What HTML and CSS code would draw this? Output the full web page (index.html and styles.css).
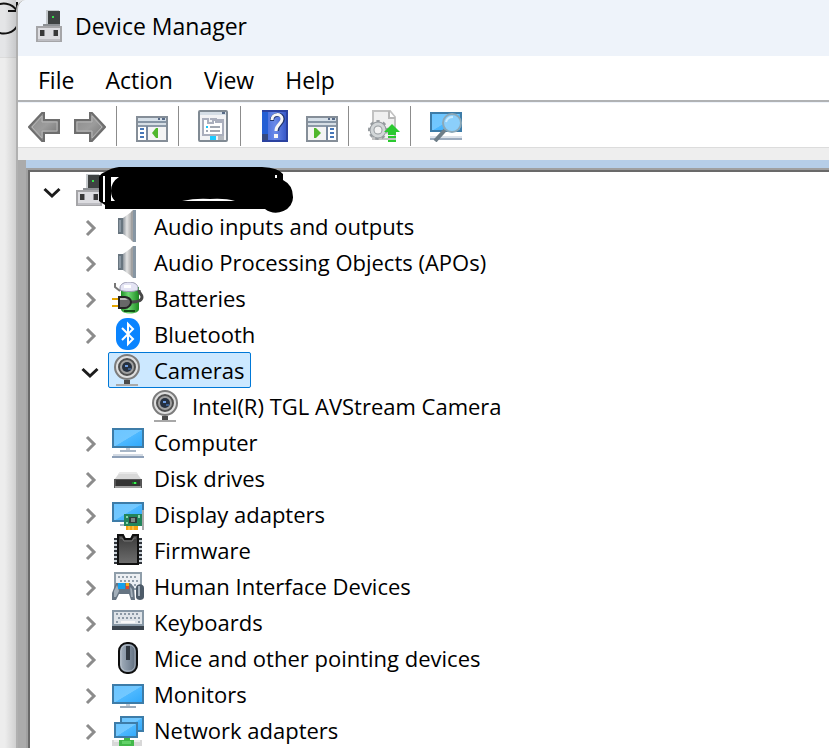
FILE: index.html
```
<!DOCTYPE html>
<html lang="en">
<head>
    <meta charset="UTF-8">
    <meta name="viewport" content="width=device-width, initial-scale=1.0">
    <title>Device Manager</title>
    <link rel="stylesheet" href="styles.css">
</head>
<body>
    <!-- shared icons -->
    <svg class="defs" width="0" height="0" aria-hidden="true">
        <defs>
            <linearGradient id="screen" x1="0" y1="0" x2="1" y2="1">
                <stop offset="0" stop-color="#6cc5ff"/>
                <stop offset=".5" stop-color="#72c8ff"/>
                <stop offset=".52" stop-color="#4db8ff"/>
                <stop offset="1" stop-color="#2fa8fb"/>
            </linearGradient>
            <linearGradient id="steel" x1="0" x2="1">
                <stop offset="0" stop-color="#8d959c"/>
                <stop offset=".35" stop-color="#e3e3e3"/>
                <stop offset="1" stop-color="#8d8d8d"/>
            </linearGradient>
            <linearGradient id="arrow" x1="0" y1="0" x2="1" y2="1">
                <stop offset="0" stop-color="#8a8a8a"/>
                <stop offset=".5" stop-color="#9c9c9c"/>
                <stop offset="1" stop-color="#6c6c6c"/>
            </linearGradient>
            <linearGradient id="book" x1="0" x2="1">
                <stop offset="0" stop-color="#3c64d8"/>
                <stop offset=".5" stop-color="#6a8ae8"/>
                <stop offset="1" stop-color="#2f50c4"/>
            </linearGradient>
            <linearGradient id="green" x1="0" x2="1">
                <stop offset="0" stop-color="#1d8f22"/>
                <stop offset=".4" stop-color="#6fd873"/>
                <stop offset="1" stop-color="#1b8a20"/>
            </linearGradient>
            <linearGradient id="chipfill" x1="0" y1="0" x2="0" y2="1">
                <stop offset="0" stop-color="#3a3a3a"/>
                <stop offset="1" stop-color="#6e6e6e"/>
            </linearGradient>
            <linearGradient id="mousefill" x1="0" x2="1">
                <stop offset="0" stop-color="#a9b5c1"/>
                <stop offset=".5" stop-color="#8290a0"/>
                <stop offset="1" stop-color="#5a6878"/>
            </linearGradient>
        </defs>

        <symbol id="right" viewBox="0 0 24 24">
            <path d="M9 5l7 7-7 7" fill="none" stroke="#8c8c8c" stroke-width="3"/>
        </symbol>
        <symbol id="down" viewBox="0 0 24 24">
            <path d="M4.500 9l7.500 7 7.500-7" fill="none" stroke="#1c1c1c" stroke-width="3"/>
        </symbol>

        <symbol id="machine" viewBox="0 0 32 32">
            <path d="M12 0h13v15H12z" fill="#c5c9cc"/>
            <path d="M14 1h12v14H14z" fill="#3e4242"/>
            <path d="M18 6h2v2h-2z" fill="#36e04a"/>
            <path d="M9 14h17v2H9z" fill="#8d9094"/>
            <path d="M2 16h26v16H2z" fill="#a5a5a8"/>
            <path d="M4 18h22v11H4z" fill="#dcdce0"/>
            <path d="M4 29h22v2H4z" fill="#bdbdc2"/>
            <path d="M6 20h4v6H6zM20 20h4v6h-4z" fill="#383838"/>
            <path d="M10 20h1v6h-1zM19 20h1v6h-1z" fill="#8f8f94"/>
        </symbol>

        <symbol id="speaker" viewBox="0 0 32 32">
            <path d="M6 8h6v16H6z" fill="#68757f"/>
            <path d="M7 10h2v12H7z" fill="#8b98a3"/>
            <path d="M11 8L22 0v32L11 24z" fill="url(#steel)"/>
            <path d="M21 0h3v32h-3z" fill="#8796a3"/>
            <path d="M19 2l2-2v32l-2-2z" fill="#a1a1a1"/>
        </symbol>

        <symbol id="battery" viewBox="0 0 32 32">
            <path d="M9 5v22c0 6 18 6 18 0V5z" fill="url(#green)"/>
            <path d="M8 6c0-8 18-8 18 0v2c-4 2-14 2-18 0z" fill="#e4e4f4" stroke="#9a9ab0"/>
            <path d="M12 3h7v3h-7z" fill="#fff"/>
            <path d="M3 1v4l5 4" fill="none" stroke="#777" stroke-width="2"/>
            <path d="M19 20c6 0 11-1 11-5 0-3-3-3-3-7" fill="none" stroke="#484848" stroke-width="3"/>
            <path d="M0 17h7M0 24h7" stroke="#e5a500" stroke-width="2"/>
            <path d="M7 15h6c3 0 6 2 6 5s-3 6-6 6H7z" fill="#686868" stroke="#242424" stroke-width="2"/>
            <path d="M8 16h5l3 2H8z" fill="#bcbcbc"/>
            <path d="M12 29h11" stroke="#124f16" stroke-width="2"/>
        </symbol>

        <symbol id="bluetooth" viewBox="0 0 32 32">
            <rect x="4" y="0" width="24" height="32" rx="11" fill="#0a84ff"/>
            <path d="M10 10l11 11-5 5V6l5 5-11 11" fill="none" stroke="#fff" stroke-width="2"/>
        </symbol>

        <symbol id="camera" viewBox="0 0 32 32">
            <circle cx="15" cy="13" r="12" fill="#dedede" stroke="#7c7c7c" stroke-width="2"/>
            <circle cx="15" cy="13" r="8" fill="#a0a0a0" stroke="#505050" stroke-width="2"/>
            <circle cx="15" cy="13" r="5" fill="#26303f"/>
            <path d="M13 11h3v2h-3z" fill="#6d9be0"/>
            <path d="M16 14h3v2h-3z" fill="#3c5d8d"/>
            <path d="M12 26h6v4h-6z" fill="#4a4a4a"/>
            <path d="M4 30h22v2H4z" fill="#a8a8a8"/>
        </symbol>

        <symbol id="computer" viewBox="0 0 32 32">
            <path d="M1 3h30v18H1z" fill="url(#screen)" stroke="#3d7ca8" stroke-width="2"/>
            <path d="M14 22h4v2h-4z" fill="#c3cbd6"/>
            <path d="M8 24h16v2H8z" fill="#a7b6c7"/>
            <path d="M1 28h30v2H1z" fill="#d4dbe4"/>
            <path d="M0 30h32v2H0z" fill="#8ea0b8"/>
        </symbol>

        <symbol id="disk" viewBox="0 0 32 32">
            <path d="M8 10h16l6 8H2z" fill="#d9d9d9"/>
            <path d="M8 10h16l2 2H6z" fill="#e8e8e8"/>
            <path d="M2 17h28v9H2z" fill="#555"/>
            <path d="M4 18h24v6H4z" fill="#333"/>
            <path d="M3 24h26v2H3z" fill="#9d9d9d"/>
            <path d="M20 20h5v2h-5z" fill="#197f25"/>
            <path d="M22 20h2v2h-2z" fill="#3bf354"/>
        </symbol>

        <symbol id="display" viewBox="0 0 32 32">
            <path d="M1 5h30v18H1z" fill="url(#screen)" stroke="#3d7ca8" stroke-width="2"/>
            <path d="M8 26h6v2H8z" fill="#a7b6c7"/>
            <path d="M30 12h2v20h-2z" fill="#a9a9a9"/>
            <path d="M12 16h18v12H12z" fill="#23855c"/>
            <path d="M14 18h2v2h-2zM14 24h2v2h-2zM26 17h2v3h-2z" fill="#8cd6ae"/>
            <path d="M17 19h8v6h-8z" fill="#2f3b39"/>
            <path d="M19 20h4v4h-4z" fill="#7c8784"/>
            <path d="M14 28h12v4H14z" fill="#f5a313"/>
            <path d="M17 28v4M21 28v4" stroke="#ffdb70"/>
        </symbol>

        <symbol id="firmware" viewBox="0 0 32 32">
            <path d="M4 4v26M28 4v26" stroke="#30343a" stroke-width="4" stroke-dasharray="2 2"/>
            <path d="M4 6v24M28 6v24" stroke="#cdd4da" stroke-width="4" stroke-dasharray="2 2"/>
            <path d="M6 1h5l2 4h6l2-4h5v29H6z" fill="url(#chipfill)" stroke="#101010" stroke-width="2"/>
            <path d="M8 4h2l2 3h8l2-3h2" fill="none" stroke="#777"/>
        </symbol>

        <symbol id="hid" viewBox="0 0 32 32">
            <path d="M3 3h26v16H3z" fill="#eceff3" stroke="#8f9eaa" stroke-width="2"/>
            <path d="M6 7h20M8 11h18M6 15h20" stroke="#94a0ab" stroke-width="2" stroke-dasharray="2 2"/>
            <path d="M4 13h14l4 4 1 13h-4l-2-6H7l-3 6H0v-7z" fill="#667482"/>
            <path d="M2 21l3-6 2 6-3 6H2zM18 17l2 2 1 8h-2z" fill="#a3afba"/>
            <path d="M8 24h8v6H8z" fill="#fff"/>
            <path d="M6 13h7v6H6z" fill="#14a0ed"/>
            <path d="M14 13h3v3h-3z" fill="#f3ad1c"/>
            <path d="M14 16h3v3h-3z" fill="#e3472b"/>
            <path d="M24 18c0-5 8-5 8 0v9c0 4-8 4-8 0z" fill="#4d5b69"/>
            <path d="M26 16h2v10h-2z" fill="#a5b1bc"/>
        </symbol>

        <symbol id="keyboard" viewBox="0 0 32 32">
            <path d="M0 4h32v18H0z" fill="#8898a6"/>
            <path d="M2 6h28v12H2z" fill="#dfe4e9"/>
            <path d="M4 8h24M6 12h22M4 16h4M26 16h2" stroke="#8b98a5" stroke-width="2" stroke-dasharray="2 2"/>
            <path d="M9 16h14" stroke="#f8f8f8" stroke-width="2"/>
            <path d="M0 20h32v4H0z" fill="#3a434d"/>
        </symbol>

        <symbol id="mouse" viewBox="0 0 32 32">
            <rect x="7" y="1" width="18" height="30" rx="8" fill="url(#mousefill)" stroke="#0d0d0d" stroke-width="2"/>
            <rect x="9" y="3" width="14" height="26" rx="6" fill="none" stroke="#c4ccd4" stroke-opacity=".6"/>
            <path d="M14 4h4v14h-4z" fill="#303840"/>
        </symbol>

        <symbol id="monitor" viewBox="0 0 32 32">
            <path d="M1 7h30v18H1z" fill="url(#screen)" stroke="#3d7ca8" stroke-width="2"/>
            <path d="M14 26h4v2h-4z" fill="#c3cbd6"/>
            <path d="M8 28h16v2H8z" fill="#9aaaba"/>
        </symbol>

        <symbol id="network" viewBox="0 0 32 32">
            <path d="M9 3h22v14H9z" fill="url(#screen)" stroke="#3d7ca8" stroke-width="2"/>
            <path d="M3 9h22v14H3z" fill="url(#screen)" stroke="#3d7ca8" stroke-width="2"/>
            <path d="M0 26h30v6H0z" fill="#d8d8d8"/>
            <path d="M2 26h26v2H2z" fill="#ececec"/>
            <path d="M7 26h15v6H7zM12 24h6v3h-6z" fill="#43b84a"/>
            <path d="M10 27h9v3h-9z" fill="#62d268"/>
        </symbol>

        <symbol id="back" viewBox="0 0 32 32">
            <path d="M1 17L14 3h2v7h15v13H16v8h-2z" fill="url(#arrow)" stroke="#6e6e6e" stroke-width="2"/>
            <path d="M4 17l10-11v6h15v9H14v7z" fill="none" stroke="#b5b5b5"/>
        </symbol>

        <symbol id="forward" viewBox="0 0 32 32">
            <path d="M31 17L18 3h-2v7H1v13h15v8h2z" fill="url(#arrow)" stroke="#6e6e6e" stroke-width="2"/>
            <path d="M28 17L18 6v6H3v9h15v7z" fill="none" stroke="#b5b5b5"/>
        </symbol>

        <symbol id="tree-pane" viewBox="0 0 32 32">
            <path d="M1 7h30v24H1z" fill="#f4f4f4" stroke="#858e98" stroke-width="2"/>
            <path d="M2 8h28v3H2z" fill="#d5dfe8"/>
            <path d="M22 8h2v2h-2zM26 8h3v2h-3z" fill="#576a87"/>
            <path d="M2 11h28v2H2z" fill="#8695a5"/>
            <path d="M2 13h28v2H2z" fill="#d6dee5"/>
            <path d="M2 15h28v2H2z" fill="#8c99a8"/>
            <path d="M2 17h8v13H2z" fill="#fff"/>
            <path d="M10 16h2v14h-2z" fill="#77889f"/>
            <path d="M4 19h4M4 23h4M4 27h4" stroke="#4777b8" stroke-width="2"/>
            <path d="M22 18v10h-2l-4-5 4-5z" fill="#50b72c"/>
        </symbol>

        <symbol id="properties" viewBox="0 0 32 32">
            <rect x="1" y="1" width="28" height="30" rx="1" fill="#f2f3f5" stroke="#808a93" stroke-width="2"/>
            <path d="M2 2h26v3H2z" fill="#d5dee6"/>
            <path d="M24 2h3v2h-3z" fill="#576a87"/>
            <path d="M5 13V9h5v4h5v-3h10v15H5z" fill="#fff" stroke="#aaafbd" stroke-width="2"/>
            <path d="M12 9h6v3h5V9" fill="none" stroke="#aaafbd" stroke-width="2"/>
            <path d="M8 17h2" stroke="#18c4fa" stroke-width="2"/>
            <path d="M8 21h2M12 17h10M12 21h10" stroke="#a1a8b2" stroke-width="2"/>
            <path d="M12 26h6v4h-6z" fill="#1ccaff"/>
            <path d="M20 26h6v4h-6z" fill="#b5bac0"/>
        </symbol>

        <symbol id="help" viewBox="0 0 32 32">
            <path d="M2 0h26v32H2z" fill="url(#book)"/>
            <path d="M2 0h6v32H2z" fill="#245fd4"/>
            <path d="M2 24h6v8H2z" fill="#354a80"/>
            <path d="M2 0h26v2H2zM26 0h2v32h-2zM2 30h26v2H2z" fill="#2b42a0"/>
            <path d="M12 11c0-8 11-8 11-2 0 5-6 5-6 12" fill="none" stroke="#24386f" stroke-width="4"/>
            <path d="M12 10c0-7 10-7 10-1 0 5-6 5-6 12" fill="none" stroke="#f6f6f6" stroke-width="3"/>
            <path d="M14 24h4v4h-4z" fill="#f6f6f6"/>
        </symbol>

        <symbol id="action-pane" viewBox="0 0 32 32">
            <path d="M1 7h30v24H1z" fill="#f4f4f4" stroke="#858e98" stroke-width="2"/>
            <path d="M2 8h28v3H2z" fill="#d5dfe8"/>
            <path d="M22 8h2v2h-2zM26 8h3v2h-3z" fill="#576a87"/>
            <path d="M2 11h28v2H2z" fill="#8695a5"/>
            <path d="M2 13h28v2H2z" fill="#d6dee5"/>
            <path d="M2 15h28v2H2z" fill="#8c99a8"/>
            <path d="M22 17h8v13h-8z" fill="#fff"/>
            <path d="M20 16h2v14h-2z" fill="#77889f"/>
            <path d="M24 19h4M24 23h4M24 27h4" stroke="#4777b8" stroke-width="2"/>
            <path d="M8 18v10h2l5-5-5-5z" fill="#50b72c"/>
        </symbol>

        <symbol id="update" viewBox="0 0 32 32">
            <path d="M5 1h17l5 6v22H5z" fill="#f0f0f0" stroke="#c2c2c2" stroke-width="2"/>
            <path d="M21 1v7h6" fill="#fff" stroke="#b7b7b7" stroke-width="2"/>
            <circle cx="10" cy="20" r="8" fill="none" stroke="#969b9f" stroke-width="4" stroke-dasharray="3 3"/>
            <circle cx="10" cy="20" r="6" fill="#f3f3f3" stroke="#969b9f" stroke-width="5"/>
            <circle cx="10" cy="20" r="6" fill="none" stroke="#d2d6d8" stroke-width="3"/>
            <path d="M16 22l8-8 8 8h-4v3h-8v-3z" fill="#2bc930"/>
            <path d="M20 27h8M20 31h8" stroke="#2bc930" stroke-width="2"/>
        </symbol>

        <symbol id="scan" viewBox="0 0 32 32">
            <path d="M1 3h30v18H1z" fill="url(#screen)" stroke="#3d7ca8" stroke-width="2"/>
            <path d="M0 28h32v2H0z" fill="#9aaabd"/>
            <path d="M0 26h32v2H0z" fill="#dce3eb"/>
            <path d="M15 20L5 31" stroke="#6e7e88" stroke-width="4"/>
            <circle cx="22" cy="13" r="9" fill="#8bcffb" stroke="#8ba8b8" stroke-width="2"/>
            <path d="M16 12c1-4 4-5 7-5" fill="none" stroke="#c8eaff" stroke-width="2"/>
        </symbol>
    </svg>

    <div class="behind">
        <svg class="reload" width="18" height="36" viewBox="0 0 18 36" aria-hidden="true">
            <path d="M17 11A15 15 0 1 0 18 24" fill="none" stroke="#111" stroke-width="2"/>
            <path d="M8 11h9V2" fill="none" stroke="#111" stroke-width="2"/>
        </svg>
    </div>

    <main class="window">
        <header class="title-bar">
            <svg class="icon"><use href="#machine"/></svg>
            <h1>Device Manager</h1>
        </header>

        <nav class="menu">
            <button type="button">File</button>
            <button type="button">Action</button>
            <button type="button">View</button>
            <button type="button">Help</button>
        </nav>

        <div class="toolbar">
            <button type="button" aria-label="Back"><svg class="icon"><use href="#back"/></svg></button>
            <button type="button" aria-label="Forward"><svg class="icon"><use href="#forward"/></svg></button>
            <span class="sep"></span>
            <button type="button" aria-label="Show or hide console tree"><svg class="icon"><use href="#tree-pane"/></svg></button>
            <span class="sep"></span>
            <button type="button" aria-label="Properties"><svg class="icon"><use href="#properties"/></svg></button>
            <span class="sep"></span>
            <button type="button" aria-label="Help"><svg class="icon"><use href="#help"/></svg></button>
            <button type="button" aria-label="Show or hide action pane"><svg class="icon"><use href="#action-pane"/></svg></button>
            <span class="sep"></span>
            <button type="button" aria-label="Update driver"><svg class="icon"><use href="#update"/></svg></button>
            <span class="sep"></span>
            <button type="button" aria-label="Scan for hardware changes"><svg class="icon"><use href="#scan"/></svg></button>
        </div>

        <div class="frame">
            <div class="pane">
                <ul class="tree">
                    <li>
                        <div class="row">
                            <button type="button" class="expander" aria-label="Collapse"><svg><use href="#down"/></svg></button>
                            <span class="item"><svg class="icon"><use href="#machine"/></svg></span>
                            <!-- computer name is blacked out -->
                            <svg class="redaction" width="200" height="48" viewBox="0 0 200 48" aria-hidden="true">
                                <path d="M6 5Q12 1 20 0H163Q180 1 184 7V13Q194 18 194 30A17 15 0 0 1 166 42H6V38L0 34V10Q2 6 6 5z"/>
                                <path d="M12 10h8q-8 5-8 14 0 6 4 10h-4z" fill="#fff"/>
                                <path d="M5 9v26" stroke="#fff" stroke-width="2"/>
                                <path d="M83 34q14-3 28-2 15-1 25 2z" fill="#fff"/>
                                <path d="M176 8h2v3h-2z" fill="#fff"/>
                            </svg>
                        </div>
                        <ul>
                            <li><div class="row"><button type="button" class="expander" aria-label="Expand"><svg><use href="#right"/></svg></button><span class="item"><svg class="icon"><use href="#speaker"/></svg>Audio inputs and outputs</span></div></li>
                            <li><div class="row"><button type="button" class="expander" aria-label="Expand"><svg><use href="#right"/></svg></button><span class="item"><svg class="icon"><use href="#speaker"/></svg>Audio Processing Objects (APOs)</span></div></li>
                            <li><div class="row"><button type="button" class="expander" aria-label="Expand"><svg><use href="#right"/></svg></button><span class="item"><svg class="icon"><use href="#battery"/></svg>Batteries</span></div></li>
                            <li><div class="row"><button type="button" class="expander" aria-label="Expand"><svg><use href="#right"/></svg></button><span class="item"><svg class="icon"><use href="#bluetooth"/></svg>Bluetooth</span></div></li>
                            <li>
                                <div class="row"><button type="button" class="expander" aria-label="Collapse"><svg><use href="#down"/></svg></button><span class="item selected"><svg class="icon"><use href="#camera"/></svg>Cameras</span></div>
                                <ul>
                                    <li><div class="row leaf"><span class="item"><svg class="icon"><use href="#camera"/></svg>Intel(R) TGL AVStream Camera</span></div></li>
                                </ul>
                            </li>
                            <li><div class="row"><button type="button" class="expander" aria-label="Expand"><svg><use href="#right"/></svg></button><span class="item"><svg class="icon"><use href="#computer"/></svg>Computer</span></div></li>
                            <li><div class="row"><button type="button" class="expander" aria-label="Expand"><svg><use href="#right"/></svg></button><span class="item"><svg class="icon"><use href="#disk"/></svg>Disk drives</span></div></li>
                            <li><div class="row"><button type="button" class="expander" aria-label="Expand"><svg><use href="#right"/></svg></button><span class="item"><svg class="icon"><use href="#display"/></svg>Display adapters</span></div></li>
                            <li><div class="row"><button type="button" class="expander" aria-label="Expand"><svg><use href="#right"/></svg></button><span class="item"><svg class="icon"><use href="#firmware"/></svg>Firmware</span></div></li>
                            <li><div class="row"><button type="button" class="expander" aria-label="Expand"><svg><use href="#right"/></svg></button><span class="item"><svg class="icon"><use href="#hid"/></svg>Human Interface Devices</span></div></li>
                            <li><div class="row"><button type="button" class="expander" aria-label="Expand"><svg><use href="#right"/></svg></button><span class="item"><svg class="icon"><use href="#keyboard"/></svg>Keyboards</span></div></li>
                            <li><div class="row"><button type="button" class="expander" aria-label="Expand"><svg><use href="#right"/></svg></button><span class="item"><svg class="icon"><use href="#mouse"/></svg>Mice and other pointing devices</span></div></li>
                            <li><div class="row"><button type="button" class="expander" aria-label="Expand"><svg><use href="#right"/></svg></button><span class="item"><svg class="icon"><use href="#monitor"/></svg>Monitors</span></div></li>
                            <li><div class="row"><button type="button" class="expander" aria-label="Expand"><svg><use href="#right"/></svg></button><span class="item"><svg class="icon"><use href="#network"/></svg>Network adapters</span></div></li>
                        </ul>
                    </li>
                </ul>
            </div>
        </div>
    </main>
</body>
</html>
```
FILE: styles.css
```
* {
    box-sizing: border-box;
}
body {
    margin: 0;
    height: 100vh;
    display: flex;
    overflow: hidden;
    font-family: "Open Sans", "Noto Sans", sans-serif;
    font-size: 22px;
    line-height: 30px;
    color: #000;
    background: linear-gradient(#e4e5e7 57px, #dcdcdc 57px, #dcdcdc 58px, #ededed 58px);
}
button {
    padding: 0;
    border: none;
    background: none;
    font: inherit;
    color: inherit;
}
ul {
    margin: 0;
    padding: 0;
    list-style: none;
}
.defs {
    position: absolute;
}
.icon {
    display: block;
    flex: none;
    width: 32px;
    height: 32px;
}

/* the strip of the window that lies behind */
.behind {
    flex: none;
    width: 16px;
    background: linear-gradient(90deg, transparent 30%, rgba(0, 0, 0, 0.12));
}
.reload {
    display: block;
}

.window {
    flex: 1;
    min-width: 0;
    display: flex;
    flex-direction: column;
    border-left: 2px solid #b0b0b0;
    border-top-left-radius: 10px;
    background-color: #fff;
    overflow: hidden;
}
.title-bar {
    flex: none;
    height: 56px;
    display: flex;
    align-items: center;
    gap: 9px;
    padding: 0 16px 4px;
    background-color: #eef3fa;
}
.title-bar h1 {
    margin: 0;
    font-size: 23px;
    font-weight: normal;
}
.menu {
    flex: none;
    height: 46px;
    display: flex;
    align-items: center;
    gap: 31px;
    padding: 3px 20px 0;
    border-bottom: 2px solid #b0b2b4;
    font-size: 23px;
}
.toolbar {
    flex: none;
    height: 46px;
    display: flex;
    align-items: flex-start;
    padding: 3px 3px 0;
    border-top: 1px solid #eef3fa;
    border-bottom: 1px solid #dcdcdc;
}
.toolbar button {
    width: 46px;
    height: 40px;
    padding: 0 7px;
}
.sep {
    width: 1px;
    height: 40px;
    margin: 0 12px 0 3px;
    background-color: #8c8c8c;
}

.frame {
    flex: 1;
    min-height: 0;
    display: flex;
    border-top: 12px solid #eee;
    background-color: #ababab;
    padding-left: 8px;
}
.pane {
    flex: 1;
    min-width: 0;
    border-top: 8px solid #b6cee8;
}
.tree {
    height: 100%;
    margin: 2px 0 0 2px;
    padding-left: 10px;
    border: 2px solid #696969;
    border-width: 2px 0 0 2px;
    outline: 2px solid #a0a0a0;
    background-color: #fff;
}
.tree ul {
    padding-left: 38px;
}
.row {
    position: relative;
    display: flex;
    align-items: center;
    gap: 6px;
    height: 36px;
}
.leaf {
    padding-left: 30px;
}
.tree ul .leaf {
    padding-left: 0;
}
.tree ul ul {
    padding-left: 68px;
}
.expander {
    flex: none;
    width: 24px;
    height: 24px;
    margin-top: 4px;
}
.expander svg {
    display: block;
    width: 24px;
    height: 24px;
}
.item {
    display: flex;
    align-items: center;
    gap: 10px;
    height: 36px;
    padding: 0 5px 0 3px;
    border: 1px solid transparent;
    white-space: nowrap;
}
.selected {
    background-color: #cce8ff;
    border-color: #0078d7;
    border-radius: 2px;
}
.redaction {
    position: absolute;
    left: 59px;
    top: -5px;
}
```
